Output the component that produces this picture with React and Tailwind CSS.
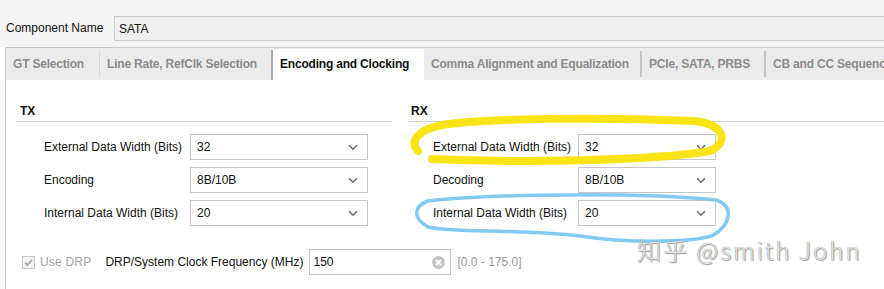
const tabs = [
  { label: 'GT Selection', w: 'w-[93px]', sep: 'light' },
  { label: 'Line Rate, RefClk Selection', w: 'w-[171px]', sep: 'dark' },
  { label: 'Encoding and Clocking', w: 'w-[151px]', active: true, sep: 'none' },
  { label: 'Comma Alignment and Equalization', w: 'w-[216px]', sep: 'mid' },
  { label: 'PCIe, SATA, PRBS', w: 'w-[122px]', sep: 'mid' },
  { label: 'CB and CC Sequence', w: 'w-[140px]', sep: 'none' },
]

const sepClass = {
  light: 'w-px h-[26px] bg-[#d6d6d6]',
  dark: 'w-[2px] h-[30px] bg-[#a9a9a9] self-end',
  mid: 'w-[2px] h-[26px] bg-[#c4c4c4]',
  none: 'hidden',
}

function Chevron() {
  return (
    <svg width="10" height="7" viewBox="0 0 10 7" className="shrink-0">
      <path d="M1 1.2 L5 5.2 L9 1.2" fill="none" stroke="#6f6f6f" strokeWidth="1.6" />
    </svg>
  )
}

function Select({ value, w }) {
  return (
    <div className={`${w} h-[26px] border border-[#c6c6c6] bg-white flex items-center pl-[6px] pr-[9px]`}>
      <span className="flex-1 text-[#111]">{value}</span>
      <Chevron />
    </div>
  )
}

function Row({ label, value, labelW, selW }) {
  return (
    <div className="flex items-center">
      <span className={`${labelW} shrink-0 text-[#111]`}>{label}</span>
      <Select value={value} w={selW} />
    </div>
  )
}

function Section({ title, rows, pad, labelW, selW, className }) {
  return (
    <div className={className}>
      <div className="pl-[3px] pb-[3px] border-b border-[#cfcfcf] font-bold text-[#111] leading-[14px]">{title}</div>
      <div className={`flex flex-col gap-[7px] pt-[12px] ${pad}`}>
        {rows.map(r => (
          <Row key={r[0]} label={r[0]} value={r[1]} labelW={labelW} selW={selW} />
        ))}
      </div>
    </div>
  )
}

export default function App() {
  return (
    <div className="relative w-[884px] h-[289px] overflow-hidden bg-white text-[12px] font-['Liberation_Sans',Arial,sans-serif] flex flex-col">

      {/* Component name */}
      <div className="flex items-start bg-[#f4f4f4] pt-[16px] pb-[6px] pl-[6px] shrink-0">
        <span className="w-[108px] leading-[25px] text-[#111]">Component Name</span>
        <div className="flex-1 h-[25px] border border-[#c9c9c9] border-r-0 bg-[#efefef] flex items-center pl-[4px] text-[#111]">SATA</div>
      </div>

      {/* Tabs */}
      <div className="ml-[5px] h-[33px] flex items-center bg-[#ebebeb] border-t border-l border-[#c8c8c8] shrink-0 whitespace-nowrap overflow-hidden">
        {tabs.map(t => (
          <div key={t.label} className="flex items-center h-full">
            <div className={[
              t.w, 'flex items-center pl-[7px] font-bold shrink-0 tracking-[-0.2px]',
              t.active ? 'bg-white text-[#111] h-[31px] self-end pb-[2px]' : 'text-[#8c8c8c] h-full',
            ].join(' ')}>
              {t.label}
            </div>
            <div className={sepClass[t.sep]} />
          </div>
        ))}
      </div>

      {/* Content */}
      <div className="ml-[5px] flex-1 border-l border-[#c8c8c8] bg-white">
        <div className="flex pt-[24px] pl-[11px]">
          <Section
            className="w-[375px] shrink-0"
            title="TX"
            pad="pl-[27px]"
            labelW="w-[146px]"
            selW="w-[178px]"
            rows={[
              ['External Data Width (Bits)', '32'],
              ['Encoding', '8B/10B'],
              ['Internal Data Width (Bits)', '20'],
            ]}
          />
          <Section
            className="flex-1 ml-[16px]"
            title="RX"
            pad="pl-[25px]"
            labelW="w-[145px]"
            selW="w-[138px]"
            rows={[
              ['External Data Width (Bits)', '32'],
              ['Decoding', '8B/10B'],
              ['Internal Data Width (Bits)', '20'],
            ]}
          />
        </div>

        {/* DRP row */}
        <div className="flex items-center mt-[23px] pl-[16px]">
          <div className="w-[13px] h-[13px] border border-[#c8c8c8] bg-[#f4f4f4] flex items-center justify-center">
            <svg width="11" height="11" viewBox="0 0 11 11">
              <path d="M2 5.6 L4.4 8 L9 2.8" fill="none" stroke="#a9a9a9" strokeWidth="1.8" />
            </svg>
          </div>
          <span className="ml-[5px] text-[#a3a3a3] tracking-[0.2px]">Use DRP</span>
          <span className="ml-[14px] text-[#111]">DRP/System Clock Frequency (MHz)</span>
          <div className="ml-[6px] w-[142px] h-[26px] border border-[#c6c6c6] bg-white flex items-center pl-[3px] pr-[5px]">
            <span className="flex-1 text-[#111]">150</span>
            <svg width="13" height="13" viewBox="0 0 13 13">
              <circle cx="6.5" cy="6.5" r="6.5" fill="#c4c4c4" />
              <path d="M4 4 L9 9 M9 4 L4 9" stroke="#fff" strokeWidth="1.8" />
            </svg>
          </div>
          <span className="ml-[6px] text-[#9a9a9a]">[0.0 - 175.0]</span>
        </div>
      </div>

      {/* hand-drawn highlights */}
      <svg className="absolute inset-0 pointer-events-none" width="884" height="289" viewBox="0 0 884 289">
        <path
          d="M432 159 C520 163 650 161 710 151 C730 142 724 124 694 121 C600 117 490 118 442 125 C420 129 408 141 418 151"
          fill="none" stroke="#fbe30a" strokeWidth="8" strokeLinecap="round" opacity="0.95"
        />
        <path
          d="M428 201 C414 206 412 218 428 227 C450 233 520 229 580 236 C625 243 685 243 712 236 C732 224 734 206 716 200 C650 193 500 193 428 201"
          fill="none" stroke="#82caf2" strokeWidth="3.5" strokeLinecap="round"
        />
      </svg>

      {/* watermark */}
      <div className="absolute left-[637px] top-[235px] text-[24px] leading-[30px] tracking-[2px] text-[#e6e6e6] font-light font-['Noto_Sans_CJK_SC',sans-serif] [text-shadow:0_0_1px_#6f6f6f,1px_1px_1px_#9a9a9a] whitespace-nowrap">
        知乎 @smith John
      </div>
    </div>
  )
}
